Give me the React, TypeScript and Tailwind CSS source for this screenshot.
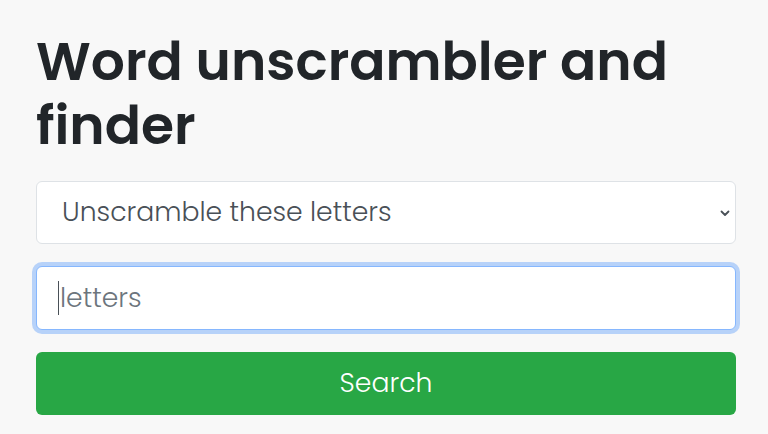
export default function App() {
  return (
    <div className="h-[434px] w-[768px] overflow-hidden bg-[#f8f8f8] px-[36px] pt-[30px] font-['Poppins','Lato',sans-serif] text-[#212529]">
      <h1 className="w-[700px] text-[53.5px] font-semibold leading-[64px]">
        Word unscrambler and finder
      </h1>

      <div className="mt-[23px] flex w-[700px] flex-col">
        {/* mode select */}
        <div className="relative flex h-[63px] items-center rounded-[6px] border border-[#dee2e6] bg-white pl-[25px]">
          <span className="text-[26.7px] font-light text-[#495057]">Unscramble these letters</span>
          <svg
            width="10"
            height="7"
            viewBox="0 0 10 7"
            className="absolute right-[5px] top-[28px]"
            fill="none"
            stroke="#495057"
            strokeWidth="1.8"
            strokeLinecap="round"
            strokeLinejoin="round"
          >
            <path d="M1.5 1.5 5 5l3.5-3.5" />
          </svg>
        </div>

        {/* letters input, focused */}
        <div className="mt-[22px] flex h-[64px] items-center rounded-[6px] border border-[#86b7fe] bg-white pl-[21px] shadow-[0_0_0_4px_rgba(13,110,253,0.28)]">
          <span className="h-[34px] w-px bg-[#495057]" />
          <span className="pl-[1px] text-[26.7px] font-light text-[#6c757d]">letters</span>
        </div>

        {/* submit */}
        <button className="mt-[22px] flex h-[63px] items-center justify-center rounded-[6px] bg-[#28a745] text-[26.7px] font-light text-white">
          Search
        </button>
      </div>
    </div>
  );
}
